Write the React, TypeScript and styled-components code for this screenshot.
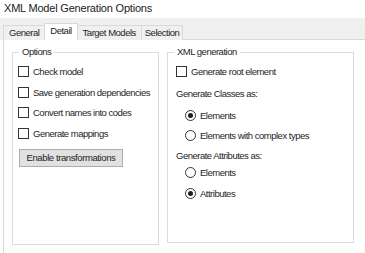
import styled, { createGlobalStyle } from "styled-components";

const GlobalStyle = createGlobalStyle`
  html, body {
    margin: 0;
    padding: 0;
    background: #ffffff;
  }
  body {
    font-family: "Liberation Sans", Arial, sans-serif;
    color: #1e1e1e;
  }
`;

const Window = styled.div`
  width: 365px;
  height: 253px;
  overflow: hidden;
  display: flex;
  flex-direction: column;
  background: #ffffff;
`;

const TitleBar = styled.div`
  height: 18px;
  padding-left: 4px;
  font-size: 11px;
  line-height: 16px;
  letter-spacing: -0.2px;
  color: #222;
`;

const TabStrip = styled.div`
  height: 22px;
  background: #f0f0f0;
  display: flex;
  align-items: flex-end;
  padding-left: 3px;
`;

const Tab = styled.div<{ $active?: boolean; $pad?: number }>`
  height: ${(p) => (p.$active ? 17 : 15)}px;
  padding: 0 ${(p) => p.$pad ?? 5}px;
  box-sizing: border-box;
  border: 1px solid #d9d9d9;
  border-bottom: none;
  margin-right: -1px;
  background: ${(p) => (p.$active ? "#ffffff" : "#f0f0f0")};
  font-size: 9.5px;
  letter-spacing: -0.5px;
  line-height: ${(p) => (p.$active ? 13 : 14)}px;
  position: relative;
  z-index: ${(p) => (p.$active ? 1 : 0)};
`;

const Panel = styled.div`
  flex: 1;
  margin-left: 3px;
  border-left: 1px solid #d9d9d9;
  border-top: 1px solid #d9d9d9;
  margin-top: -1px;
  padding: 12px 0 0 8px;
  display: flex;
  gap: 8px;
  align-items: flex-start;
`;

const Group = styled.div<{ $w: number; $h: number }>`
  position: relative;
  width: ${(p) => p.$w}px;
  height: ${(p) => p.$h}px;
  box-sizing: border-box;
  border: 1px solid #dcdcdc;
  display: flex;
  flex-direction: column;
  align-items: flex-start;
`;

const Legend = styled.span`
  position: absolute;
  top: -7px;
  left: 6px;
  padding: 0 3px;
  background: #ffffff;
  font-size: 9.5px;
  letter-spacing: -0.5px;
  line-height: 12px;
`;

const OptionList = styled.div`
  display: flex;
  flex-direction: column;
  gap: 7.5px;
  padding: 12px 0 0 5px;
`;

const XmlList = styled.div`
  display: flex;
  flex-direction: column;
  padding: 12px 0 0 8px;
`;

const Row = styled.label<{ $gap?: number; $indent?: number }>`
  display: flex;
  align-items: center;
  gap: 4px;
  height: 13px;
  margin-top: ${(p) => p.$gap ?? 0}px;
  margin-left: ${(p) => p.$indent ?? 0}px;
  font-size: 9.5px;
  letter-spacing: -0.5px;
  line-height: 13px;
  white-space: nowrap;
`;

const Caption = styled.div<{ $gap: number }>`
  margin-top: ${(p) => p.$gap}px;
  height: 13px;
  font-size: 9.5px;
  letter-spacing: -0.5px;
  line-height: 13px;
  white-space: nowrap;
`;

const Box = styled.span`
  width: 11px;
  height: 11px;
  box-sizing: border-box;
  border: 1px solid #333;
  background: #fff;
  flex: none;
`;

const Radio = styled.span<{ $on?: boolean }>`
  width: 11px;
  height: 11px;
  box-sizing: border-box;
  border: 1px solid #333;
  border-radius: 50%;
  background: #fff;
  flex: none;
  display: flex;
  align-items: center;
  justify-content: center;
  &::after {
    content: "";
    width: 5px;
    height: 5px;
    border-radius: 50%;
    background: ${(p) => (p.$on ? "#1e1e1e" : "transparent")};
  }
`;

const Button = styled.div`
  margin: 9px 0 0 6px;
  width: 104px;
  height: 18px;
  box-sizing: border-box;
  border: 1px solid #adadad;
  background: #e1e1e1;
  font-size: 9.5px;
  letter-spacing: -0.4px;
  line-height: 16px;
  text-align: center;
`;

const checks = [
  "Check model",
  "Save generation dependencies",
  "Convert names into codes",
  "Generate mappings",
];

export default function App() {
  return (
    <>
      <GlobalStyle />
      <Window>
        <TitleBar>XML Model Generation Options</TitleBar>
        <TabStrip>
          <Tab>General</Tab>
          <Tab $active>Detail</Tab>
          <Tab>Target Models</Tab>
          <Tab $pad={3}>Selection</Tab>
        </TabStrip>
        <Panel>
          <Group $w={147} $h={193}>
            <Legend>Options</Legend>
            <OptionList>
              {checks.map((c) => (
                <Row key={c}>
                  <Box />
                  {c}
                </Row>
              ))}
            </OptionList>
            <Button>Enable transformations</Button>
          </Group>
          <Group $w={187} $h={191}>
            <Legend>XML generation</Legend>
            <XmlList>
              <Row>
                <Box />
                Generate root element
              </Row>
              <Caption $gap={9}>Generate Classes as:</Caption>
              <Row $gap={9} $indent={9}>
                <Radio $on />
                Elements
              </Row>
              <Row $gap={7} $indent={9}>
                <Radio />
                Elements with complex types
              </Row>
              <Caption $gap={7}>Generate Attributes as:</Caption>
              <Row $gap={4} $indent={9}>
                <Radio />
                Elements
              </Row>
              <Row $gap={8} $indent={9}>
                <Radio $on />
                Attributes
              </Row>
            </XmlList>
          </Group>
        </Panel>
      </Window>
    </>
  );
}
